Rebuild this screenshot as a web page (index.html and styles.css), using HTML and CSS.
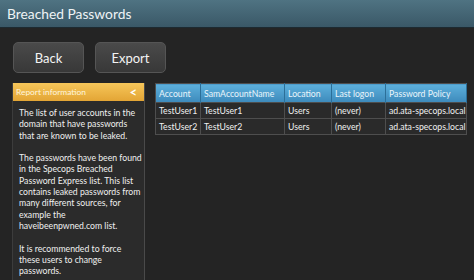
FILE: index.html
```html
<!DOCTYPE html>
<html lang="en">
<head>
  <meta charset="UTF-8">
  <title>Breached Passwords</title>
  <link rel="stylesheet" href="styles.css">
</head>
<body>
  <div class="titlebar">Breached Passwords</div>

  <div class="toolbar">
    <button class="btn">Back</button>
    <button class="btn">Export</button>
  </div>

  <div class="main">
    <div class="panel">
      <div class="panel-head">
        <span>Report information</span>
        <span class="chevron">&lt;</span>
      </div>
      <div class="panel-body">
        <p>The list of user accounts in the domain that have passwords that are known to be leaked.</p>
        <p>The passwords have been found in the Specops Breached Password Express list. This list contains leaked passwords from many different sources, for example the haveibeenpwned.com list.</p>
        <p>It is recommended to force these users to change passwords.</p>
      </div>
    </div>

    <table class="grid">
      <colgroup>
        <col class="c1"><col class="c2"><col class="c3"><col class="c4"><col class="c5">
      </colgroup>
      <thead>
        <tr>
          <th>Account</th>
          <th>SamAccountName</th>
          <th>Location</th>
          <th>Last logon</th>
          <th>Password Policy</th>
        </tr>
      </thead>
      <tbody>
        <tr>
          <td>TestUser1</td>
          <td>TestUser1</td>
          <td>Users</td>
          <td>(never)</td>
          <td>ad.ata-specops.local</td>
        </tr>
        <tr>
          <td>TestUser2</td>
          <td>TestUser2</td>
          <td>Users</td>
          <td>(never)</td>
          <td>ad.ata-specops.local</td>
        </tr>
      </tbody>
    </table>
  </div>
</body>
</html>
```

FILE: styles.css
```css
body {
  margin: 0;
  background: #242424;
  color: #f0f0f0;
  font-family: Lato, "Open Sans", sans-serif;
  height: 280px;
  overflow: hidden;
}
.titlebar {
  height: 27px;
  line-height: 28px;
  padding-left: 7px;
  font-size: 13.8px;
  color: #eef3f5;
  background: linear-gradient(180deg, #4f7382, #3a5867);
  border-bottom: 1px solid #1d2a31;
}
.toolbar {
  display: flex;
  gap: 11px;
  padding: 14px 13px 10px;
}
.btn {
  width: 71px;
  height: 31px;
  font-family: inherit;
  font-size: 13px;
  color: #f4f4f4;
  background: linear-gradient(180deg, #4a4a4a, #383838);
  border: 1px solid #555;
  border-radius: 5px;
  padding: 0;
}
.main {
  display: flex;
  align-items: flex-start;
  gap: 10px;
  padding-left: 12px;
}
.panel {
  flex: 0 0 133px;
  height: 200px;
  background: #2b2b2b;
  border-right: 1px solid #4a4a4a;
  border-left: 1px solid #3c3c3c;
  box-sizing: border-box;
}
.panel-head {
  display: flex;
  justify-content: space-between;
  align-items: center;
  height: 18px;
  padding: 0 7px 0 3px;
  font-size: 8.4px;
  color: #fff6df;
  background: linear-gradient(180deg, #f6c65a, #e3a535);
}
.chevron {
  font-size: 13px;
  font-weight: bold;
  color: #fff;
}
.panel-body {
  padding: 6px 2px 0 6px;
  font-size: 8.7px;
  line-height: 11.3px;
}
.panel-body p {
  margin: 0 0 11.3px;
}
.grid {
  width: 311px;
  table-layout: fixed;
  border-collapse: collapse;
  font-size: 8.7px;
  background: #2a2a2a;
  border: 1px solid #4e4e4e;
}
.grid th {
  height: 18px;
  padding: 0 3px;
  text-align: left;
  font-weight: normal;
  color: #eaf5fb;
  background: linear-gradient(180deg, #5db0dc, #3d8abb);
  border-right: 1px solid #2c6f98;
  white-space: nowrap;
}
.grid td {
  height: 15px;
  padding: 0 3px;
  border: 1px solid #4e4e4e;
  white-space: nowrap;
}
.c1 { width: 45px; }
.c2 { width: 84px; }
.c3 { width: 47px; }
.c4 { width: 54px; }
.c5 { width: 81px; }
```
